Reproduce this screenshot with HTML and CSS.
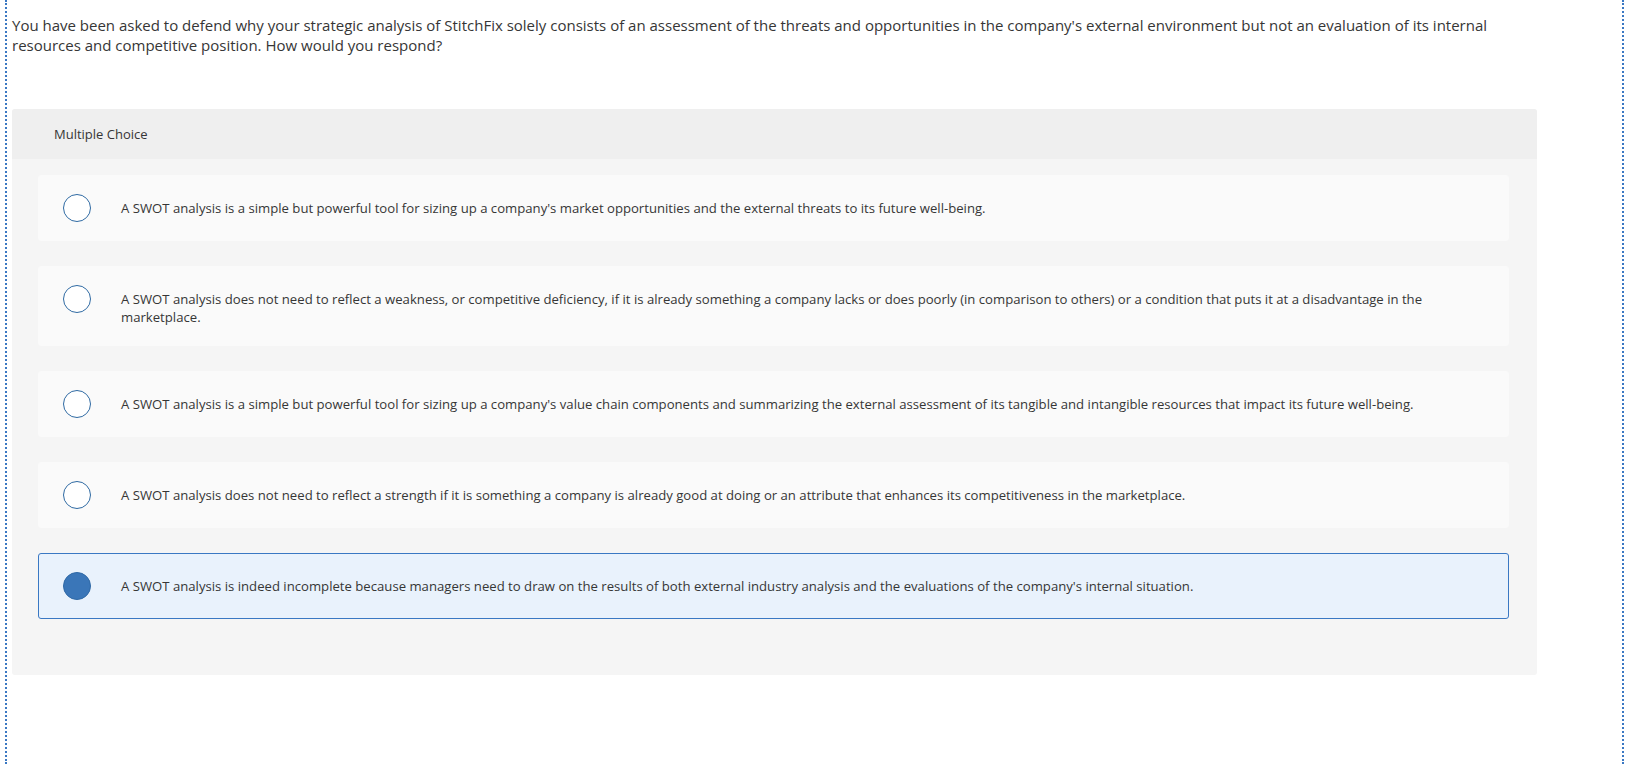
FILE: index.html
```html
<!DOCTYPE html>
<html>
<head>
<meta charset="utf-8">
<link rel="stylesheet" href="styles.css">
</head>
<body>
<div class="frame">
  <p class="question">You have been asked to defend why your strategic analysis of StitchFix solely consists of an assessment of the threats and opportunities in the company's external environment but not an evaluation of its internal resources and competitive position. How would you respond?</p>
  <div class="panel">
    <div class="panel-head">Multiple Choice</div>
    <div class="choices">
      <div class="choice">
        <span class="radio"></span>
        <div class="choice-text">A SWOT analysis is a simple but powerful tool for sizing up a company's market opportunities and the external threats to its future well-being.</div>
      </div>
      <div class="choice">
        <span class="radio"></span>
        <div class="choice-text">A SWOT analysis does not need to reflect a weakness, or competitive deficiency, if it is already something a company lacks or does poorly (in comparison to others) or a condition that puts it at a disadvantage in the marketplace.</div>
      </div>
      <div class="choice">
        <span class="radio"></span>
        <div class="choice-text">A SWOT analysis is a simple but powerful tool for sizing up a company's value chain components and summarizing the external assessment of its tangible and intangible resources that impact its future well-being.</div>
      </div>
      <div class="choice">
        <span class="radio"></span>
        <div class="choice-text">A SWOT analysis does not need to reflect a strength if it is something a company is already good at doing or an attribute that enhances its competitiveness in the marketplace.</div>
      </div>
      <div class="choice selected">
        <span class="radio"></span>
        <div class="choice-text">A SWOT analysis is indeed incomplete because managers need to draw on the results of both external industry analysis and the evaluations of the company's internal situation.</div>
      </div>
    </div>
  </div>
</div>
</body>
</html>
```

FILE: styles.css
```css
html, body {
  margin: 0;
  padding: 0;
  background: #ffffff;
}

body {
  font-family: "Open Sans", "Noto Sans", sans-serif;
  color: #333333;
}

.frame {
  box-sizing: border-box;
  margin-left: 5px;
  width: 1619px;
  min-height: 764px;
  border-left: 2px dotted #3a78c3;
  border-right: 2px dotted #3a78c3;
  padding: 15px 85px 0 5px;
}

.question {
  margin: 0;
  font-size: 15px;
  line-height: 20px;
  color: #363636;
}

.panel {
  margin-top: 54px;
  background: #f5f5f5;
  border-radius: 3px;
  padding-bottom: 56px;
}

.panel-head {
  height: 50px;
  display: flex;
  align-items: center;
  padding-left: 42px;
  background: #efefef;
  border-radius: 3px 3px 0 0;
  font-size: 13px;
  color: #363636;
}

.choices {
  display: flex;
  flex-direction: column;
  gap: 25px;
  padding: 16px 28px 0 26px;
}

.choice {
  display: flex;
  align-items: flex-start;
  background: #fafafa;
  border: 1px solid #fafafa;
  border-radius: 3px;
  padding: 18px 24px 18px 24px;
}

.choice.selected {
  background: #e9f2fc;
  border-color: #3a78c3;
}

.radio {
  flex: none;
  box-sizing: border-box;
  width: 28px;
  height: 28px;
  border-radius: 50%;
  border: 1.5px solid #2f6aa3;
  background: #ffffff;
}

.selected .radio {
  background: #3a76b8;
  border-color: #2f69a6;
}

.choice-text {
  margin-left: 30px;
  padding: 5px 50px 1px 0;
  font-size: 13.15px;
  line-height: 18px;
  color: #363636;
}
```
